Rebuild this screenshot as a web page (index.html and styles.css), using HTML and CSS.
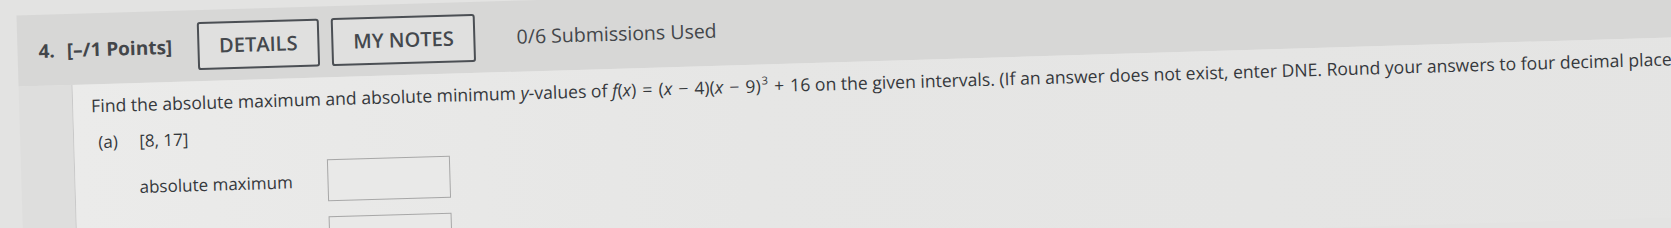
FILE: index.html
```html
<!DOCTYPE html>
<html lang="en">
<head>
    <meta charset="UTF-8">
    <meta name="viewport" content="width=device-width, initial-scale=1.0">
    <title>Question 4</title>
    <link rel="stylesheet" href="styles.css">
</head>
<body>
    <div class="page">
        <div class="question">
            <div class="q-head">
                <span class="q-num">4.</span>
                <span class="q-points">[–/1 Points]</span>
                <button class="q-btn">DETAILS</button>
                <button class="q-btn">MY NOTES</button>
                <span class="q-subs">0/6 Submissions Used</span>
            </div>
            <div class="q-body">
                <div class="gutter"></div>
                <div class="q-content">
                    <p class="q-text">Find the absolute maximum and absolute minimum <i>y</i>-values of <i>f</i>(<i>x</i>) <span class="op">=</span> (<i>x</i> <span class="op">−</span> 4)(<i>x</i> <span class="op">−</span> 9)<sup>3</sup> <span class="op">+</span> 16 on the given intervals. (If an answer does not exist, enter DNE. Round your answers to four decimal places.)</p>
                    <div class="part">
                        <span class="part-label">(a)</span>
                        <span>[8, 17]</span>
                    </div>
                    <div class="answer-row">
                        <span class="answer-label">absolute maximum</span>
                        <span class="answer-box"></span>
                    </div>
                    <div class="answer-row">
                        <span class="answer-label"></span>
                        <span class="answer-box"></span>
                    </div>
                </div>
            </div>
        </div>
    </div>
</body>
</html>
```

FILE: styles.css
```css
:root {
    --text-color: #35383c;
    --head-bg: #d7d7d6;
    --outer-bg: #e3e3e2;
}

* {
    margin: 0;
    padding: 0;
    box-sizing: border-box;
}

html, body {
    overflow: hidden;
}

body {
    font-family: 'Open Sans', 'Liberation Sans', sans-serif;
    background-color: var(--outer-bg);
    color: var(--text-color);
    height: 228px;
}

/* the photo was taken at a slight angle */
.page {
    width: 1760px;
    padding: 16px 0 0 16px;
    transform: rotate(-1.7deg);
    transform-origin: 0 0;
}

.q-head {
    display: flex;
    align-items: center;
    height: 71px;
    padding-left: 21px;
    background-color: var(--head-bg);
    white-space: nowrap;
}

.q-num,
.q-points {
    font-weight: 700;
    font-size: 19px;
    color: #43464a;
}

.q-num {
    margin-right: 12px;
}

.q-points {
    margin-right: 25px;
}

.q-btn {
    height: 48px;
    padding: 0 20px;
    margin-right: 12px;
    font-family: inherit;
    font-size: 20px;
    font-weight: 600;
    color: #44484d;
    background-color: #e0e0df;
    border: 2px solid #4b4f54;
    border-radius: 3px;
}

.q-subs {
    margin-left: 29px;
    font-size: 19.5px;
    color: #43464a;
}

.q-body {
    display: flex;
    height: 180px;
}

.gutter {
    width: 54px;
    background-color: #dededd;
    border-right: 1px solid #c9c9c9;
}

.q-content {
    flex: 1;
    padding: 9px 0 0 18px;
    background: linear-gradient(to right, #ebebea, #e6e6e5 40%, #e4e4e3);
    font-size: 17px;
    white-space: nowrap;
}

.q-text {
    font-size: 17.6px;
    line-height: 24px;
}

.q-text .op {
    padding: 0 1.5px;
}

.q-text sup {
    font-size: 11px;
    vertical-align: 8px;
    line-height: 0;
    margin-left: 1px;
}

.part {
    display: flex;
    margin-top: 13px;
    padding-left: 6px;
    line-height: 24px;
}

.part-label {
    width: 41px;
}

.answer-row {
    display: flex;
    align-items: center;
    margin-top: 12px;
    padding-left: 46px;
}

.answer-row + .answer-row {
    margin-top: 15px;
}

.answer-label {
    width: 188px;
}

.answer-box {
    width: 123px;
    height: 42px;
    border: 1.5px solid #a7a7a7;
    background-color: #e9e9e8;
}
```
